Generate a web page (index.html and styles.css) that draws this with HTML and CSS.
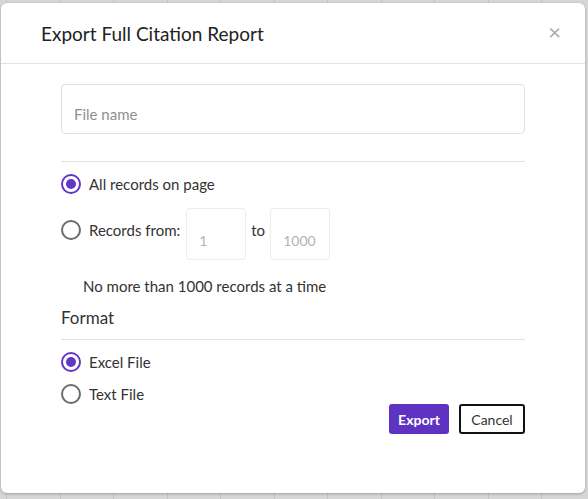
FILE: index.html
```html
<!DOCTYPE html>
<html>
<head>
<meta charset="utf-8">
<link rel="stylesheet" href="styles.css">
</head>
<body>
<div class="modal">
  <div class="modal-header">
    <h1 class="title">Export Full Citation Report</h1>
    <span class="close">&#215;</span>
  </div>
  <div class="modal-body">
    <div class="field"><span class="placeholder">File name</span></div>
    <div class="rule"></div>
    <div class="radio-row first">
      <span class="radio checked"></span><span class="label">All records on page</span>
    </div>
    <div class="radio-row range">
      <span class="radio"></span><span class="label">Records from:</span>
      <span class="num-box small"><span class="ph">1</span></span>
      <span class="label to">to</span>
      <span class="num-box second"><span class="ph">1000</span></span>
    </div>
    <p class="note">No more than 1000 records at a time</p>
    <h2 class="section">Format</h2>
    <div class="rule thin"></div>
    <div class="radio-row fmt">
      <span class="radio checked"></span><span class="label">Excel File</span>
    </div>
    <div class="radio-row fmt2">
      <span class="radio"></span><span class="label">Text File</span>
    </div>
    <div class="actions">
      <button class="btn primary">Export</button>
      <button class="btn outline">Cancel</button>
    </div>
  </div>
</div>
</body>
</html>
```
FILE: styles.css
```css
html, body {
  margin: 0;
  padding: 0;
}
body {
  width: 588px;
  height: 499px;
  overflow: hidden;
  background-color: #d6d6d6;
  background-image: repeating-linear-gradient(90deg, transparent 0, transparent 6px, #c4c4c4 6px, #c4c4c4 7px, transparent 7px, transparent 53.5px);
  font-family: "Lato", "Noto Sans", sans-serif;
  color: #333;
}
.modal {
  margin: 3px 0 0 1px;
  width: 584px;
  height: 490px;
  background: #fff;
  border-radius: 6px;
  box-shadow: 0 1px 3px rgba(0,0,0,0.25);
}
.modal-header {
  height: 60px;
  border-bottom: 1px solid #e2e2e6;
  display: flex;
  align-items: center;
  padding: 0 24px 0 40px;
  justify-content: space-between;
}
.title {
  margin: 0;
  font-size: 19px;
  font-weight: 400;
  color: #222;
}
.close {
  font-size: 22px;
  color: #aaa;
  line-height: 1;
  margin-top: -2px;
}
.modal-body {
  padding: 20px 60px 0 60px;
}
.field {
  border: 1px solid #e0e0e0;
  border-radius: 4px;
  display: flex;
  align-items: center;
  padding: 9px 12px 0;
  box-sizing: border-box;
  height: 50px;
}
.placeholder {
  font-size: 15px;
  color: #8f8f8f;
}
.rule {
  height: 1px;
  background: #e2e2e6;
  margin-top: 27px;
}
.radio-row {
  display: flex;
  align-items: center;
}
.radio-row.first {
  margin-top: 12px;
}
.radio-row.range {
  align-items: flex-start;
  margin-top: 14px;
}
.radio-row.range .radio,
.radio-row.range .label {
  margin-top: 12px;
}
.radio {
  width: 20px;
  height: 20px;
  box-sizing: border-box;
  border: 2px solid #6b6b6b;
  border-radius: 50%;
  margin-right: 8px;
  position: relative;
  flex: none;
}
.radio.checked {
  border-color: #6236c9;
}
.radio.checked::after {
  content: "";
  position: absolute;
  left: 3px;
  top: 3px;
  width: 10px;
  height: 10px;
  border-radius: 50%;
  background: #6236c9;
}
.label {
  font-size: 15px;
  color: #333;
  line-height: 20px;
}
.num-box {
  width: 60px;
  height: 52px;
  border: 1px solid #ececec;
  border-radius: 4px;
  box-sizing: border-box;
  margin-left: 6px;
  display: flex;
  align-items: flex-end;
  padding: 0 0 10px 12px;
}
.num-box.second {
  margin-left: 5px;
}
.label.to {
  margin-left: 5px;
  margin-right: 0;
}
.num-box .ph {
  font-size: 14px;
  color: #b3b3b3;
  line-height: 16px;
}
.note {
  margin: 16px 0 0 22px;
  font-size: 15px;
  line-height: 20px;
  color: #333;
}
.section {
  margin: 11px 0 0 0;
  font-size: 17px;
  font-weight: 400;
  line-height: 22px;
  color: #333;
}
.rule.thin {
  margin-top: 10px;
}
.radio-row.fmt {
  margin-top: 12px;
}
.radio-row.fmt2 {
  margin-top: 12px;
}
.actions {
  display: flex;
  justify-content: flex-end;
  gap: 10px;
}
.btn {
  height: 30px;
  font-family: inherit;
  font-size: 14px;
  border-radius: 3px;
  padding: 0;
  cursor: pointer;
}
.btn.primary {
  width: 60px;
  background: #5e33c1;
  color: #fff;
  border: none;
  font-weight: 700;
}
.btn.outline {
  width: 66px;
  background: #fff;
  color: #333;
  border: 2px solid #111;
}
```
